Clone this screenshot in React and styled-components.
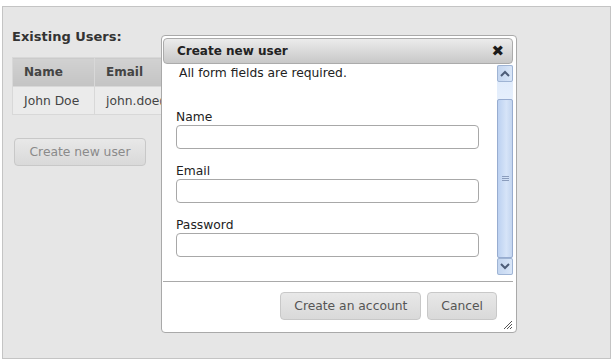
import React from 'react';
import styled, {createGlobalStyle} from 'styled-components';

const Global = createGlobalStyle`
    html, body {
        margin: 0;
        padding: 0;
        background: #fff;
        font-family: "DejaVu Sans", Verdana, sans-serif;
        font-size: 12.3px;
        color: #333;
    }
`

const Page = styled.div`
    position: relative;
    width: 613px;
    height: 363px;
    padding: 6px 0 0 2px;
    box-sizing: border-box;
`

const Frame = styled.div`
    width: 609px;
    height: 353px;
    box-sizing: border-box;
    border: 1px solid #c4c4c4;
    background: #e6e6e6;
    padding: 22px 9px;
    overflow: hidden;
`

const Heading = styled.h3`
    margin: 0 0 12px 0;
    font-size: 13px;
    font-weight: bold;
    color: #333;
    line-height: 16px;
`

const Table = styled.table`
    border-collapse: collapse;
    width: 260px;

    th, td {
        text-align: left;
        padding: 0 11px;
        border: 1px solid #d8d8d8;
    }
    th {
        height: 28px;
        font-weight: bold;
        font-size: 12px;
        color: #444;
        background: linear-gradient(#d2d2d2, #c4c4c4);
    }
    td {
        height: 27px;
        color: #444;
        background: #ebebeb;
    }
`

const Button = styled.button`
    font-family: "DejaVu Sans", Verdana, sans-serif;
    font-size: 12.3px;
    color: ${p => p.$muted ? '#8a8a8a' : '#555'};
    height: 28px;
    padding: 0 ${p => p.$pad || 12}px;
    border: 1px solid #c8c8c8;
    border-radius: 4px;
    background: linear-gradient(#e8e8e8, #d9d9d9);
    cursor: pointer;
`

const PageButton = styled(Button)`
    margin: 23px 0 0 2px;
    width: 132px;
`

const Dialog = styled.div`
    position: absolute;
    left: 161px;
    top: 35px;
    width: 356px;
    height: 298px;
    box-sizing: border-box;
    border: 1px solid #a9a9a9;
    border-radius: 4px;
    background: #fff;
    padding: 2px 3px 2px 1px;
    display: flex;
    flex-direction: column;
`

const TitleBar = styled.div`
    height: 26px;
    box-sizing: border-box;
    border: 1px solid #ababab;
    border-radius: 4px;
    background: linear-gradient(#ececec, #c8c8c8);
    display: flex;
    align-items: center;
    justify-content: space-between;
    padding: 0 8px 0 13px;
    font-weight: bold;
    font-size: 12px;
    color: #222;
`

const Close = styled.span`
    font-size: 15px;
    line-height: 15px;
    color: #1a1a1a;
`

const Body = styled.div`
    height: 211px;
    display: flex;
`

const Content = styled.div`
    flex: 1;
    padding: 1px 18px 0 13px;
`

const Note = styled.p`
    margin: 0 0 29px 3px;
    line-height: 16px;
    color: #222;
`

const Field = styled.div`
    display: flex;
    flex-direction: column;
    margin-bottom: 15px;

    label {
        line-height: 14px;
        color: #222;
        margin-bottom: 1px;
    }
`

const Input = styled.input`
    height: 24px;
    box-sizing: border-box;
    border: 1px solid #a8a8a8;
    border-radius: 4px;
    background: #fff;
`

const Scrollbar = styled.div`
    width: 16px;
    box-sizing: border-box;
    margin: 1px 0 0 0;
    display: flex;
    flex-direction: column;
    background: linear-gradient(#dce9fb, #f4f8fe 40%, #e8f0fb);
`

const Arrow = styled.div`
    height: 17px;
    box-sizing: border-box;
    border: 1px solid #9fb4d4;
    border-radius: 2px;
    background: linear-gradient(90deg, #c4d6f0, #d9e6f8);
    display: flex;
    align-items: center;
    justify-content: center;
`

const Track = styled.div`
    flex: 1;
    padding: 17px 0 0 0;
    display: flex;
`

const Thumb = styled.div`
    flex: 1;
    border: 1px solid #97acd0;
    border-radius: 2px;
    background: linear-gradient(90deg, #bcd1f1, #d6e4f8 60%, #c3d5f0);
    display: flex;
    align-items: center;
    justify-content: center;
`

const Footer = styled.div`
    position: relative;
    flex: 1;
    margin-top: 6px;
    border-top: 1px solid #a9a9a9;
    display: flex;
    justify-content: flex-end;
    align-items: flex-start;
    gap: 6px;
    padding: 10px 16px 0 0;
`

const Grip = styled.svg`
    position: absolute;
    right: 0;
    bottom: 0;
`

const Chevron = ({up}) => (
    <svg width="10" height="7" viewBox="0 0 10 7">
        <path d={up ? 'M1 6 L5 2 L9 6' : 'M1 1 L5 5 L9 1'} stroke="#4d5d78" strokeWidth="2" fill="none"/>
    </svg>
)

const users = [{name: 'John Doe', email: 'john.doe@example.com'}]

export default function App() {
    return (
        <Page>
            <Global/>
            <Frame>
                <Heading>Existing Users:</Heading>
                <Table>
                    <thead>
                        <tr>
                            <th style={{width: 59}}>Name</th>
                            <th>Email</th>
                        </tr>
                    </thead>
                    <tbody>
                        {users.map(u => (
                            <tr key={u.email}>
                                <td>{u.name}</td>
                                <td>{u.email}</td>
                            </tr>
                        ))}
                    </tbody>
                </Table>
                <PageButton $muted>Create new user</PageButton>
            </Frame>
            <Dialog>
                <TitleBar>
                    <span>Create new user</span>
                    <Close>&#10006;</Close>
                </TitleBar>
                <Body>
                    <Content>
                        <Note>All form fields are required.</Note>
                        <Field>
                            <label>Name</label>
                            <Input/>
                        </Field>
                        <Field>
                            <label>Email</label>
                            <Input/>
                        </Field>
                        <Field>
                            <label>Password</label>
                            <Input type="password"/>
                        </Field>
                    </Content>
                    <Scrollbar>
                        <Arrow><Chevron up/></Arrow>
                        <Track>
                            <Thumb>
                                <svg width="7" height="7" viewBox="0 0 7 7">
                                    <path d="M0 1.5 H7 M0 3.5 H7 M0 5.5 H7" stroke="#8a9cbc" strokeWidth="1"/>
                                </svg>
                            </Thumb>
                        </Track>
                        <Arrow><Chevron/></Arrow>
                    </Scrollbar>
                </Body>
                <Footer>
                    <Button $pad={13}>Create an account</Button>
                    <Button $pad={13}>Cancel</Button>
                    <Grip width="12" height="12" viewBox="0 0 12 12">
                        <path d="M11 3 L3 11 M11 6 L6 11 M11 9 L9 11" stroke="#555" strokeWidth="1"/>
                    </Grip>
                </Footer>
            </Dialog>
        </Page>
    )
}
